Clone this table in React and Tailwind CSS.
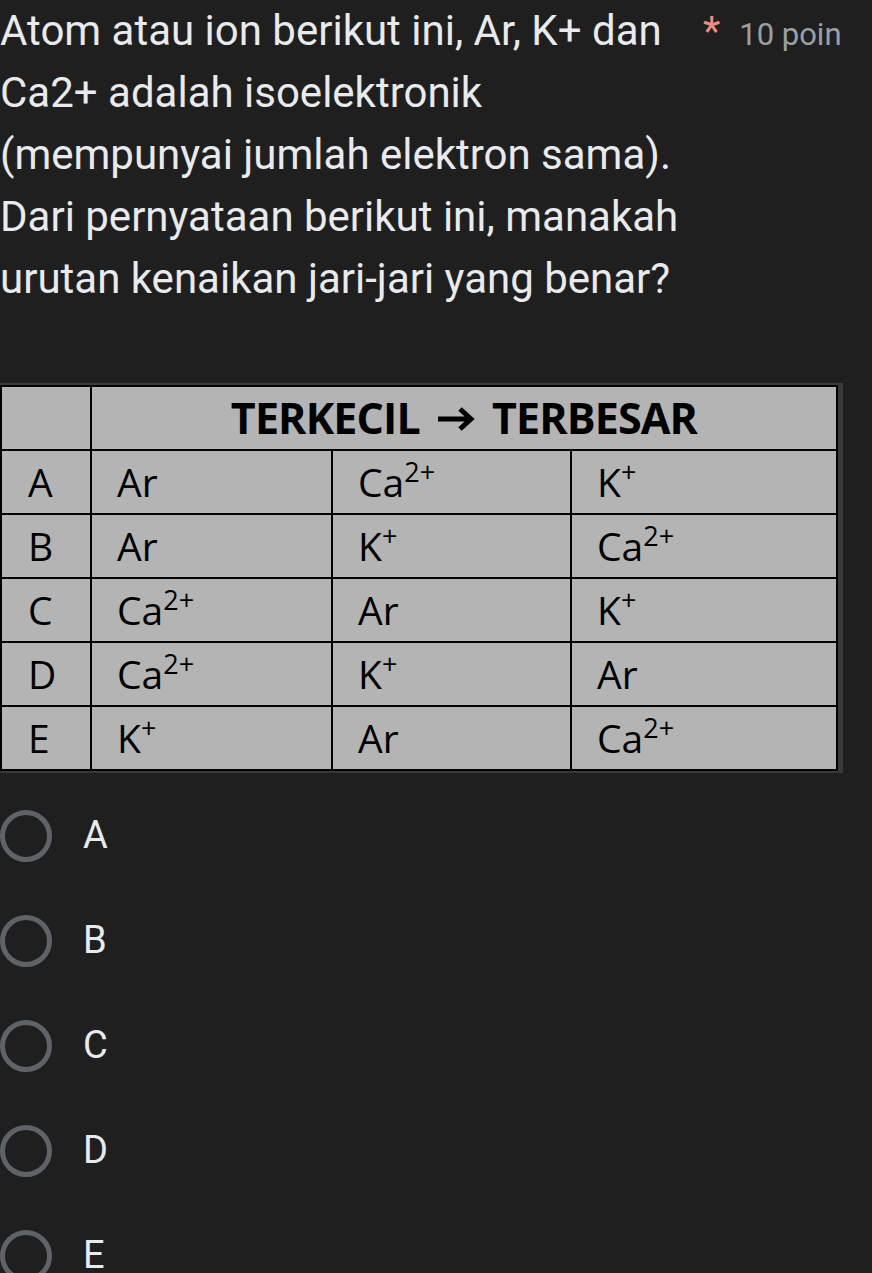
import React from 'react';

const rows = [
  ['A', 'Ar', 'Ca2', 'K'],
  ['B', 'Ar', 'K', 'Ca2'],
  ['C', 'Ca2', 'Ar', 'K'],
  ['D', 'Ca2', 'K', 'Ar'],
  ['E', 'K', 'Ar', 'Ca2'],
];

// ion label with the charge as superscript
function Ion({ name }) {
  if (name === 'Ca2') return <span>Ca<sup className="text-[27px] -top-[15px]">2+</sup></span>;
  if (name === 'K') return <span>K<sup className="text-[27px] -top-[15px]">+</sup></span>;
  return <span>{name}</span>;
}

export default function App() {
  const options = ['A', 'B', 'C', 'D', 'E'];

  return (
    <div className="min-h-screen w-[872px] bg-[#1f1f1f] overflow-hidden font-['Roboto',sans-serif]">
      {/* Question title */}
      <div className="flex items-baseline">
        <p className="w-[700px] text-[42px] leading-[62px] text-[#e8eaed]">
          Atom atau ion berikut ini, Ar, K+ dan Ca2+ adalah isoelektronik (mempunyai jumlah elektron sama). Dari pernyataan berikut ini, manakah urutan kenaikan jari-jari yang benar?
        </p>
        <span className="ml-[3px] text-[40px] leading-none text-[#f28b82]">*</span>
        <span className="ml-[19px] text-[31px] text-[#9aa0a6]">10 poin</span>
      </div>

      {/* Table image */}
      <div className="mt-[73px] w-[843px] bg-[#3a3a3a] pt-[2px] pb-[2px] pr-[5px]">
        <table className="w-[838px] border-collapse bg-[#b4b4b4] text-black font-['Open_Sans',sans-serif] text-[39px]">
          <tbody>
            <tr className="h-[64px]">
              <td className="w-[90px] border-2 border-black"></td>
              <td colSpan={3} className="border-2 border-black">
                <div className="flex items-center justify-center gap-[16px] font-bold text-[43px] leading-[52px] tracking-[-0.02em]">
                  <span>TERKECIL</span>
                  <svg width="40" height="26" viewBox="0 0 40 26" className="mt-[2px]">
                    <path d="M2 13 H35 M24 3 L35 13 L24 23" fill="none" stroke="black" strokeWidth="5" strokeLinejoin="miter" />
                  </svg>
                  <span>TERBESAR</span>
                </div>
              </td>
            </tr>
            {rows.map((r) => (
              <tr key={r[0]} className="h-[64px]">
                <td className="border-2 border-black pl-[26px]">{r[0]}</td>
                <td className="w-[241px] border-2 border-black pl-[25px]"><Ion name={r[1]} /></td>
                <td className="w-[239px] border-2 border-black pl-[25px]"><Ion name={r[2]} /></td>
                <td className="border-2 border-black pl-[25px]"><Ion name={r[3]} /></td>
              </tr>
            ))}
          </tbody>
        </table>
      </div>

      {/* Radio options */}
      <div className="mt-[10px] flex flex-col">
        {options.map((o) => (
          <div key={o} className="flex h-[105px] items-center">
            <div className="h-[52px] w-[52px] rounded-full border-[5px] border-[#5f6368]"></div>
            <span className="ml-[31px] text-[38px] text-[#e8eaed]">{o}</span>
          </div>
        ))}
      </div>
    </div>
  );
}
